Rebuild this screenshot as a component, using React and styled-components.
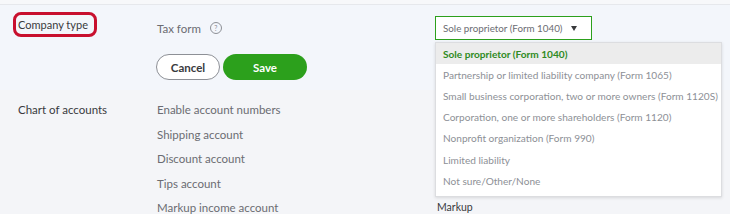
import React from 'react';
import styled, { createGlobalStyle } from 'styled-components';

const Global = createGlobalStyle`
  body {
    margin: 0;
    background: #f4f5f8;
    font-family: Lato, "Open Sans", sans-serif;
    -webkit-font-smoothing: antialiased;
  }
`;

const options = [
  'Sole proprietor (Form 1040)',
  'Partnership or limited liability company (Form 1065)',
  'Small business corporation, two or more owners (Form 1120S)',
  'Corporation, one or more shareholders (Form 1120)',
  'Nonprofit organization (Form 990)',
  'Limited liability',
  'Not sure/Other/None',
];

const accountRows = [
  'Enable account numbers',
  'Shipping account',
  'Discount account',
  'Tips account',
  'Markup income account',
];

const App = () => {
  return (
    <Page>
      <Global />
      <TopStrip />
      <EditSection>
        <LabelCell>
          <Ringed>Company type</Ringed>
        </LabelCell>
        <FieldCell>
          Tax form
          <HelpIcon>?</HelpIcon>
        </FieldCell>
        <SelectCell>
          <Select>
            <span>Sole proprietor (Form 1040)</span>
            <Caret />
          </Select>
          <Menu>
            {options.map((o, i) => (
              <MenuItem key={o} selected={i === 0}>{o}</MenuItem>
            ))}
          </Menu>
        </SelectCell>
        <div />
        <Buttons>
          <CancelBtn>Cancel</CancelBtn>
          <SaveBtn>Save</SaveBtn>
        </Buttons>
      </EditSection>
      <AccountsSection>
        <SectionLabel>Chart of accounts</SectionLabel>
        <AccountList>
          {accountRows.map((r) => (
            <AccountRow key={r}>{r}</AccountRow>
          ))}
        </AccountList>
        <RightCol>
          <MarkupLabel>Markup</MarkupLabel>
        </RightCol>
      </AccountsSection>
    </Page>
  );
};

export default App;

const Page = styled.div`
  width: 730px;
  height: 214px;
  overflow: hidden;
  background: #f4f5f8;
`;

const TopStrip = styled.div`
  height: 4px;
  background: #f7f8fa;
  border-bottom: 1px solid #e6e8ec;
`;

const EditSection = styled.div`
  display: grid;
  grid-template-columns: 156px 279px 1fr;
  grid-template-rows: 34px 35px;
  align-items: center;
  padding: 6px 0 10px;
  background: #f3f6fb;
`;

const LabelCell = styled.div`
  padding-left: 13px;
  align-self: start;
  padding-top: 1px;
`;

const Ringed = styled.span`
  display: inline-flex;
  align-items: center;
  height: 19px;
  padding: 0 6px 0 2px;
  border: 3px solid #c8102e;
  border-radius: 8px;
  font-size: 11px;
  color: #393a3d;
`;

const FieldCell = styled.div`
  display: flex;
  align-items: center;
  gap: 9px;
  padding-left: 1px;
  font-size: 11.5px;
  color: #6b6c72;
`;

const HelpIcon = styled.span`
  display: inline-flex;
  align-items: center;
  justify-content: center;
  width: 10px;
  height: 10px;
  border: 1px solid #8d9096;
  border-radius: 50%;
  font-size: 7px;
  color: #8d9096;
`;

const SelectCell = styled.div`
  position: relative;
  align-self: center;
`;

const Select = styled.div`
  display: flex;
  align-items: center;
  justify-content: space-between;
  box-sizing: border-box;
  width: 157px;
  height: 24px;
  padding: 0 14px 0 7px;
  background: #fff;
  border: 1px solid #2ca01c;
  font-size: 9.8px;
  color: #6b6c72;
  white-space: nowrap;
`;

const Caret = styled.span`
  width: 0;
  height: 0;
  border-left: 3px solid transparent;
  border-right: 3px solid transparent;
  border-top: 5px solid #393a3d;
`;

const Menu = styled.div`
  position: absolute;
  top: 26px;
  left: 0;
  width: 285px;
  padding-bottom: 5px;
  background: #fff;
  border: 1px solid #dcdde0;
  box-shadow: 0 1px 3px rgba(0, 0, 0, 0.12);
  z-index: 5;
`;

const MenuItem = styled.div`
  height: 21.2px;
  display: flex;
  align-items: center;
  padding-left: 7px;
  font-size: 10.1px;
  white-space: nowrap;
  background: ${(p) => (p.selected ? '#ececec' : '#fff')};
  color: ${(p) => (p.selected ? '#2f8a23' : '#8d9096')};
  font-weight: ${(p) => (p.selected ? 700 : 400)};
`;

const Buttons = styled.div`
  display: flex;
  gap: 3px;
  align-self: end;
`;

const PillBtn = styled.button`
  height: 26px;
  border-radius: 13px;
  font-family: Lato, "Open Sans", sans-serif;
  font-size: 11.5px;
  font-weight: 700;
  cursor: pointer;
`;

const CancelBtn = styled(PillBtn)`
  width: 64px;
  background: #fff;
  border: 1px solid #8d9096;
  color: #393a3d;
`;

const SaveBtn = styled(PillBtn)`
  width: 84px;
  background: #2ca01c;
  border: none;
  color: #fff;
`;

const AccountsSection = styled.div`
  display: grid;
  grid-template-columns: 157px 278px 1fr;
  padding-top: 12px;
`;

const SectionLabel = styled.div`
  padding-left: 18px;
  font-size: 11.5px;
  color: #393a3d;
  line-height: 15px;
`;

const AccountList = styled.div`
  display: flex;
  flex-direction: column;
  gap: 9.5px;
`;

const AccountRow = styled.div`
  font-size: 11.5px;
  line-height: 15px;
  color: #6b6c72;
`;

const RightCol = styled.div`
  display: flex;
  flex-direction: column;
  justify-content: flex-end;
  padding-left: 2px;
`;

const MarkupLabel = styled.div`
  font-size: 10.5px;
  line-height: 13px;
  color: #393a3d;
  margin-bottom: 1px;
`;
